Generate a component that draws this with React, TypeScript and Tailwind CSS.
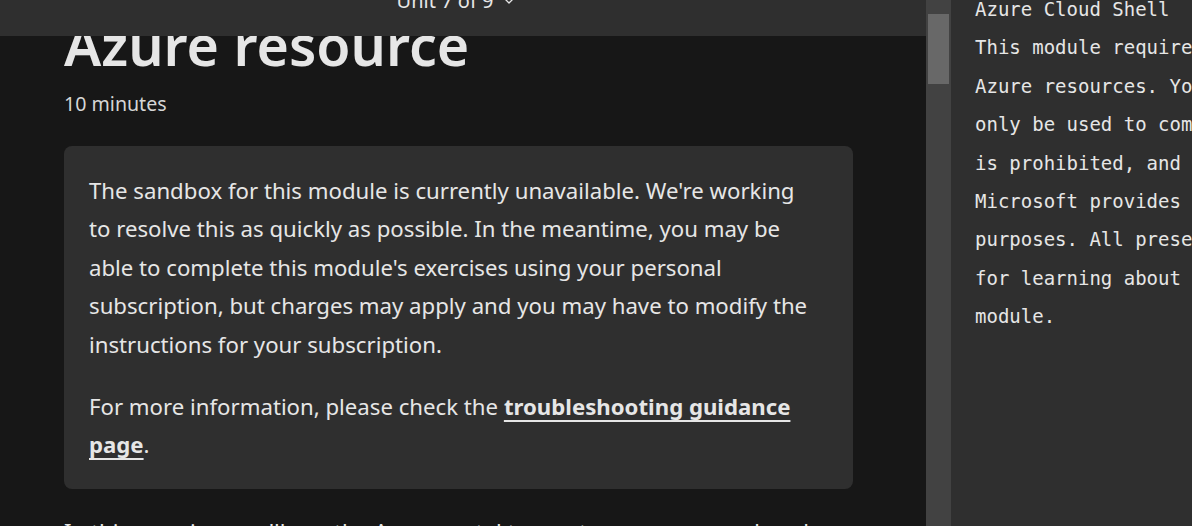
import { ChevronDown } from 'lucide-react';

const shellLines = [
    'Azure Cloud Shell',
    'This module requires a sandbox to complete. A sandbox gives you access to free',
    'Azure resources. Your subscription will not be charged. The sandbox may',
    'only be used to complete training on Microsoft Learn. Use for any other reason',
    'is prohibited, and may result in permanent loss of access to the sandbox.',
    'Microsoft provides this lab experience and related content for educational',
    'purposes. All presented information is owned by Microsoft and intended solely',
    'for learning about the covered products and services in this Microsoft Learn',
    'module.',
];

export default function App() {
    return (
        <div className="flex h-[526px] w-[1192px] overflow-hidden bg-[#171717] font-['Noto_Sans',sans-serif]">
            {/* main learn content */}
            <div className="relative w-[926px] shrink-0 overflow-hidden bg-[#171717]">
                <div className="px-16">
                    <h1 className="mt-[12px] text-[55.5px] font-semibold leading-[1.2] text-[#e6e6e6]">Azure resource</h1>
                    <p className="mt-[10px] text-[19.6px] leading-[1.5] text-[#d6d6d6]">10 minutes</p>

                    <div className="mt-[28px] w-[789px] rounded-lg bg-[#2f2f2f] px-[25px] pt-[26px] pb-6 text-[22.2px] leading-[38.4px] text-[#e6e6e6]">
                        <p>
                            The sandbox for this module is currently unavailable. We're working<br />
                            to resolve this as quickly as possible. In the meantime, you may be<br />
                            able to complete this module's exercises using your personal<br />
                            subscription, but charges may apply and you may have to modify the<br />
                            instructions for your subscription.
                        </p>
                        <p className="mt-6">
                            For more information, please check the{' '}
                            <a className="font-bold underline underline-offset-[5px]">troubleshooting guidance page</a>.
                        </p>
                    </div>

                    <p className="mt-[24px] text-[22.2px] leading-[38.4px] text-[#e6e6e6]">
                        In this exercise, you'll use the Azure portal to create a resource and explore its settings.
                    </p>
                </div>

                {/* sticky unit bar */}
                <div className="absolute top-0 left-0 right-0 h-9 bg-[#2f2f2f]">
                    <div className="-mt-[14px] flex items-center justify-center gap-2 pr-3 text-[20px] text-[#e6e6e6]">
                        <span>Unit 7 of 9</span>
                        <ChevronDown size={16} strokeWidth={2} />
                    </div>
                </div>
            </div>

            {/* scrollbar */}
            <div className="w-[25px] shrink-0 bg-[#424242] px-[2px] pt-[14px]">
                <div className="h-[70px] w-full bg-[#686868]" />
            </div>

            {/* cloud shell panel */}
            <div className="flex-1 overflow-hidden bg-[#2f2f2f] pl-6">
                <div className="-mt-[10px] whitespace-pre font-['DejaVu_Sans_Mono',monospace] text-[19px] leading-[38.4px] text-[#e6e6e6]">
                    {shellLines.map(line => (
                        <div key={line}>{line}</div>
                    ))}
                </div>
            </div>
        </div>
    );
}
